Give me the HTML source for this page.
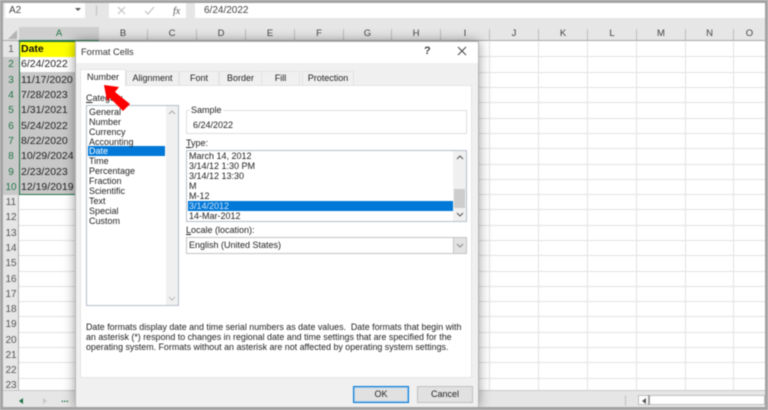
<!DOCTYPE html>
<html><head><meta charset="utf-8"><style>
html,body{margin:0;padding:0;background:#e6e6e6}
#p{position:relative;width:768px;height:410px;overflow:hidden;background:#e6e6e6;font-family:"Liberation Sans",sans-serif;color:#333;filter:blur(.5px)}
#p div{position:absolute;box-sizing:border-box}
.t{white-space:nowrap;font-size:9px;line-height:10px;color:#222}
.c{white-space:nowrap;font-size:10.5px;line-height:15px;color:#222}
.h{font-size:9.5px;line-height:14px;text-align:center;color:#444;top:27px;height:14px}
.r{left:3px;width:16px;font-size:10px;line-height:15px;text-align:center;color:#555;background:#e6e6e6}
.vl{top:41px;bottom:20px;width:1px;background:#e2e2e2}
.hl{left:19px;right:3px;height:1px;background:#e2e2e2}
.hs{top:29px;width:1px;height:12px;background:#bdbdbd}
.tab{top:71px;height:14px;background:#f0f0f0;border:1px solid #e3e3e3;border-bottom:0;text-align:center;font-size:9px;line-height:13px;color:#222;white-space:nowrap}
</style></head><body><div id="p">

<!-- formula bar -->
<div style="left:5px;top:3px;width:80px;height:15px;background:#fff"></div>
<div class="c" style="left:9px;top:3px;font-size:10px;color:#444">A2</div>
<div style="left:75px;top:8px;width:0;height:0;border:3px solid transparent;border-top:3.5px solid #555"></div>
<div style="left:96px;top:6px;width:1px;height:9px;border-left:1px dotted #999"></div>
<div style="left:109px;top:3px;width:77px;height:15px;background:#fff"></div>
<svg style="position:absolute;left:116px;top:5px" width="70" height="11"><path d="M2 2l7 7M9 2l-7 7" stroke="#c4c4c4" stroke-width="1.2" fill="none"/><path d="M29 6l3 3 6-7" stroke="#c4c4c4" stroke-width="1.2" fill="none"/><text x="57" y="9" font-family="Liberation Serif" font-style="italic" font-size="10" fill="#555">fx</text></svg>
<div style="left:195px;top:3px;width:570px;height:15px;background:#fff"></div>
<div class="c" style="left:204px;top:3px;font-size:10px;color:#444">6/24/2022</div>

<!-- grid -->
<div style="left:19px;top:41px;right:3px;bottom:20px;background:#fff"></div>
<div style="left:3px;top:27px;right:3px;height:14px;background:#e6e6e6;border-bottom:1px solid #a8a8a8"></div>
<svg style="position:absolute;left:6px;top:30px" width="12" height="10"><path d="M11 0V9H2Z" fill="#b4b4b4"/></svg>
<div style="left:19px;top:27px;width:80px;height:14px;background:#cfcfcf;border-bottom:1px solid #217346"></div>
<div class="h" style="left:19px;width:80px;color:#217346">A</div>
<div class="h" style="left:99px;width:48px">B</div><div class="h" style="left:148px;width:48px">C</div><div class="h" style="left:197px;width:48px">D</div><div class="h" style="left:246px;width:48px">E</div><div class="h" style="left:295px;width:48px">F</div><div class="h" style="left:344px;width:47px">G</div><div class="h" style="left:392px;width:48px">H</div><div class="h" style="left:441px;width:48px">I</div><div class="h" style="left:490px;width:48px">J</div><div class="h" style="left:539px;width:48px">K</div><div class="h" style="left:588px;width:48px">L</div><div class="h" style="left:637px;width:48px">M</div><div class="h" style="left:686px;width:47px">N</div><div class="h" style="left:734px;width:31px;text-align:center">O</div>
<div class="hs" style="left:147px"></div><div class="hs" style="left:196px"></div><div class="hs" style="left:245px"></div><div class="hs" style="left:294px"></div><div class="hs" style="left:343px"></div><div class="hs" style="left:391px"></div><div class="hs" style="left:440px"></div><div class="hs" style="left:489px"></div><div class="hs" style="left:538px"></div><div class="hs" style="left:587px"></div><div class="hs" style="left:636px"></div><div class="hs" style="left:685px"></div><div class="hs" style="left:733px"></div>
<div class="vl" style="left:489px"></div><div class="vl" style="left:538px"></div><div class="vl" style="left:587px"></div><div class="vl" style="left:636px"></div><div class="vl" style="left:685px"></div><div class="vl" style="left:733px"></div>
<div class="hl" style="top:56px"></div><div class="hl" style="top:72px"></div><div class="hl" style="top:87px"></div><div class="hl" style="top:102px"></div><div class="hl" style="top:118px"></div><div class="hl" style="top:133px"></div><div class="hl" style="top:148px"></div><div class="hl" style="top:164px"></div><div class="hl" style="top:179px"></div><div class="hl" style="top:194px"></div><div class="hl" style="top:209px"></div><div class="hl" style="top:225px"></div><div class="hl" style="top:240px"></div><div class="hl" style="top:255px"></div><div class="hl" style="top:271px"></div><div class="hl" style="top:286px"></div><div class="hl" style="top:301px"></div><div class="hl" style="top:316px"></div><div class="hl" style="top:332px"></div><div class="hl" style="top:347px"></div><div class="hl" style="top:362px"></div><div class="hl" style="top:378px"></div>

<!-- row headers -->
<div style="left:3px;top:41px;width:16px;height:349px;background:#e6e6e6;border-right:1px solid #b0b0b0"></div>
<div style="left:3px;top:57px;width:16px;height:138px;background:#c9c9c9"></div>
<div class="r" style="top:42px">1</div>
<div class="r" style="top:57px;background:none;color:#217346">2</div><div class="r" style="top:73px;background:none;color:#217346">3</div><div class="r" style="top:88px;background:none;color:#217346">4</div><div class="r" style="top:103px;background:none;color:#217346">5</div><div class="r" style="top:119px;background:none;color:#217346">6</div><div class="r" style="top:134px;background:none;color:#217346">7</div><div class="r" style="top:149px;background:none;color:#217346">8</div><div class="r" style="top:165px;background:none;color:#217346">9</div><div class="r" style="top:180px;background:none;color:#217346">10</div>
<div class="r" style="top:195px;background:none">11</div><div class="r" style="top:210px;background:none">12</div><div class="r" style="top:226px;background:none">13</div><div class="r" style="top:241px;background:none">14</div><div class="r" style="top:256px;background:none">15</div><div class="r" style="top:272px;background:none">16</div><div class="r" style="top:287px;background:none">17</div><div class="r" style="top:302px;background:none">18</div><div class="r" style="top:317px;background:none">19</div><div class="r" style="top:333px;background:none">20</div><div class="r" style="top:348px;background:none">21</div><div class="r" style="top:363px;background:none">22</div><div class="r" style="top:378px;background:none;height:12px;overflow:hidden">23</div>

<!-- column A cells -->
<div style="left:19px;top:42px;width:56px;height:15px;background:#ffff00"></div>
<div style="left:19px;top:72px;width:56px;height:123px;background:#c8c8c8"></div>
<div class="c" style="left:21px;top:42px;font-weight:bold;color:#111">Date</div>
<div class="c" style="left:21px;top:57px">6/24/2022</div>
<div class="c" style="left:21px;top:73px">11/17/2020</div>
<div class="c" style="left:21px;top:88px">7/28/2023</div>
<div class="c" style="left:21px;top:103px">1/31/2021</div>
<div class="c" style="left:21px;top:119px">5/24/2022</div>
<div class="c" style="left:21px;top:134px">8/22/2020</div>
<div class="c" style="left:21px;top:149px">10/29/2024</div>
<div class="c" style="left:21px;top:165px">2/23/2023</div>
<div class="c" style="left:21px;top:180px">12/19/2019</div>
<div style="left:19px;top:41px;width:60px;height:154px;border:1px solid #217346"></div>

<!-- bottom bar -->
<div style="left:3px;top:390px;right:3px;height:17px;background:#e6e6e6;border-top:1px solid #c8c8c8"></div>
<div style="left:19px;top:398px;width:0;height:0;border:3px solid transparent;border-right:4px solid #217346;border-left:0"></div>
<div style="left:43px;top:398px;width:0;height:0;border:3px solid transparent;border-left:4px solid #c8c8c8;border-right:0"></div>
<div class="t" style="left:61px;top:394px;font-size:9px;color:#217346;font-weight:bold">...</div>
<div style="left:625px;top:396px;height:9px;border-left:1px dotted #999"></div>
<div style="left:638px;top:395px;width:127px;height:10px;background:#fff;border:1px solid #c0c0c0"></div>
<div style="left:648px;top:395px;width:2px;height:10px;background:#a0a0a0"></div>
<div style="left:642px;top:398px;width:0;height:0;border:3px solid transparent;border-right:4px solid #555;border-left:0"></div>

<!-- dialog -->
<div style="left:75px;top:41px;width:404px;height:366px;background:#f0f0f0;box-shadow:0 0 11px rgba(0,0,0,.4);border:1px solid #b5b5b5;border-bottom:0"></div>
<div style="left:76px;top:42px;width:402px;height:21px;background:#fff"></div>
<div class="t" style="left:81px;top:47px;font-size:9.3px;color:#333">Format Cells</div>
<div class="t" style="left:424px;top:46px;font-size:11px;font-weight:bold;color:#444">?</div>
<svg style="position:absolute;left:457px;top:46px" width="10" height="10"><path d="M1 1l8 8M9 1l-8 8" stroke="#444" stroke-width="1" fill="none"/></svg>

<!-- tab page -->
<div style="left:80px;top:85px;width:392px;height:293px;background:#fff;border:1px solid #e3e3e3"></div>
<div class="tab" style="left:126px;width:53px">Alignment</div>
<div class="tab" style="left:179px;width:40px">Font</div>
<div class="tab" style="left:219px;width:43px">Border</div>
<div class="tab" style="left:262px;width:38px;border-left:0">Fill</div>
<div class="tab" style="left:302px;width:52px">Protection</div>
<div class="tab" style="left:80px;width:46px;top:69px;height:17px;background:#fff;border-bottom:0;line-height:15px">Number</div>

<!-- category -->
<div class="t" style="left:86px;top:93px"><u>C</u>ategory</div>
<div style="left:86px;top:105px;width:93px;height:201px;background:#fff;border:1px solid #b5bcc9"></div>
<div style="left:166px;top:106px;width:12px;height:199px;background:#f0f0f0"></div>
<svg style="position:absolute;left:168px;top:109px" width="8" height="6"><path d="M1 5l3-3 3 3" stroke="#aaa" fill="none"/></svg>
<svg style="position:absolute;left:168px;top:296px" width="8" height="6"><path d="M1 1l3 3 3-3" stroke="#bbb" fill="none"/></svg>
<div style="left:88px;top:146px;width:77px;height:10px;background:#0078d7"></div>
<div class="t" style="left:89px;top:107px">General</div>
<div class="t" style="left:89px;top:117px">Number</div>
<div class="t" style="left:89px;top:127px">Currency</div>
<div class="t" style="left:89px;top:137px">Accounting</div>
<div class="t" style="left:89px;top:146px;color:#fff">Date</div>
<div class="t" style="left:89px;top:156px">Time</div>
<div class="t" style="left:89px;top:166px">Percentage</div>
<div class="t" style="left:89px;top:176px">Fraction</div>
<div class="t" style="left:89px;top:186px">Scientific</div>
<div class="t" style="left:89px;top:196px">Text</div>
<div class="t" style="left:89px;top:206px">Special</div>
<div class="t" style="left:89px;top:216px">Custom</div>

<!-- sample -->
<div style="left:186px;top:110px;width:281px;height:24px;border:1px solid #e0e0e0"></div>
<div class="t" style="left:190px;top:105px;background:#fff;padding:0 1px">Sample</div>
<div class="t" style="left:193px;top:120px">6/24/2022</div>

<!-- type -->
<div class="t" style="left:186px;top:138px"><u>T</u>ype:</div>
<div style="left:186px;top:150px;width:281px;height:72px;background:#fff;border:1px solid #b5bcc9"></div>
<div style="left:453px;top:151px;width:13px;height:70px;background:#f0f0f0"></div>
<div style="left:454px;top:189px;width:11px;height:19px;background:#cdcdcd"></div>
<svg style="position:absolute;left:456px;top:154px" width="8" height="6"><path d="M1 5l3-3 3 3" stroke="#555" fill="none"/></svg>
<svg style="position:absolute;left:456px;top:212px" width="8" height="6"><path d="M1 1l3 3 3-3" stroke="#555" fill="none"/></svg>
<div style="left:188px;top:201px;width:265px;height:10px;background:#0078d7"></div>
<div class="t" style="left:189px;top:151px">March 14, 2012</div>
<div class="t" style="left:189px;top:161px">3/14/12 1:30 PM</div>
<div class="t" style="left:189px;top:171px">3/14/12 13:30</div>
<div class="t" style="left:189px;top:181px">M</div>
<div class="t" style="left:189px;top:191px">M-12</div>
<div class="t" style="left:189px;top:201px;color:#cfe3f7">3/14/2012</div>
<div class="t" style="left:189px;top:211px">14-Mar-2012</div>

<!-- locale -->
<div class="t" style="left:186px;top:225px"><u>L</u>ocale (location):</div>
<div style="left:186px;top:237px;width:281px;height:17px;background:#fff;border:1px solid #c4c4c4"></div>
<div style="left:453px;top:238px;width:13px;height:15px;background:#e3e3e3;border-left:1px solid #c4c4c4"></div>
<svg style="position:absolute;left:456px;top:243px" width="8" height="6"><path d="M1 1l3 3 3-3" stroke="#888" fill="none"/></svg>
<div class="t" style="left:189px;top:240px">English (United States)</div>

<!-- description -->
<div class="t" style="left:86px;top:322px;font-size:8.9px">Date formats display date and time serial numbers as date values.&nbsp; Date formats that begin with</div>
<div class="t" style="left:86px;top:332px;font-size:8.9px">an asterisk (*) respond to changes in regional date and time settings that are specified for the</div>
<div class="t" style="left:86px;top:342px;font-size:8.9px">operating system. Formats without an asterisk are not affected by operating system settings.</div>

<!-- buttons -->
<div style="left:353px;top:386px;width:56px;height:17px;background:#e1e1e1;border:1px solid #0078d7;text-align:center;font-size:9px;line-height:15px;color:#222;box-shadow:inset 0 0 0 1px #9cc7ec">OK</div>
<div style="left:417px;top:386px;width:56px;height:17px;background:#e1e1e1;border:1px solid #c0c0c0;text-align:center;font-size:9px;line-height:15px;color:#222">Cancel</div>

<!-- arrow -->
<svg style="position:absolute;left:0;top:0" width="768" height="410"><polygon points="104,85 119,87 115,92 130,104 123,111 110,98 107,101" fill="#fe0000"/></svg>

<!-- outer frame -->
<div style="left:0;top:0;width:768px;height:410px;border:3px solid #a3a3a3"></div>
</div></body></html>
